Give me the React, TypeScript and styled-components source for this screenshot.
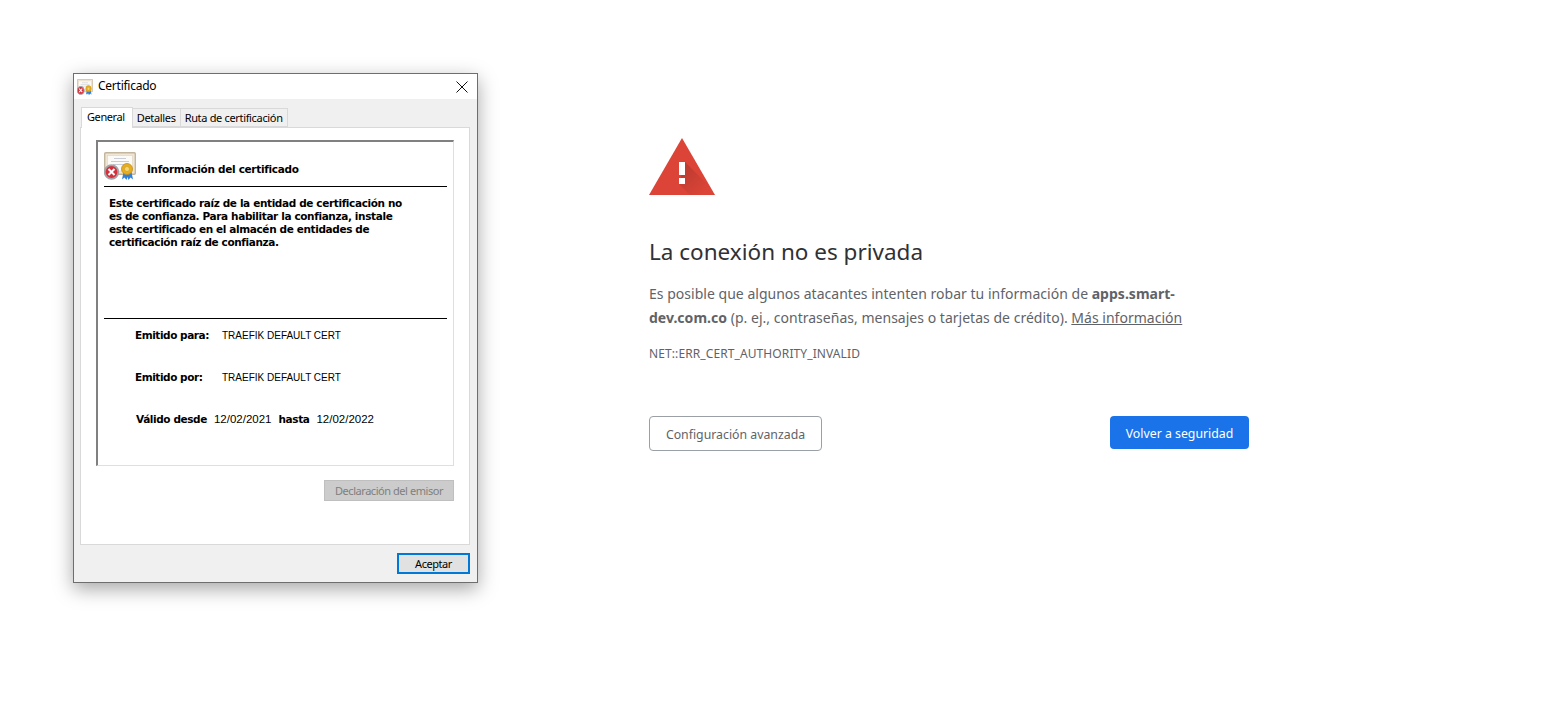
import styled, { createGlobalStyle } from 'styled-components';

const GlobalStyle = createGlobalStyle`
  html, body {
    margin: 0;
    padding: 0;
    background: #fff;
    overflow: hidden;
  }
`;

const CertIcon = ({ width, height }: { width: number; height: number }) => (
  <CertSvg width={width} height={height} viewBox="0 0 32 28" preserveAspectRatio="none">
    <rect x="0.700" y="0.700" width="30.600" height="21.600" rx="1" fill="#efe6d6" stroke="#c4b59d" strokeWidth="1.400" />
    <rect x="3.500" y="3.500" width="25" height="15.500" fill="#fbfaf6" stroke="#dcd2c0" strokeWidth="0.600" />
    <path d="M10 6.500h12M7 9.500h18M9 12.500h14" stroke="#c8ccd6" strokeWidth="1" />
    <path d="M19.500 20l-1.500 7.500 2.500-2 2 2.500 1-3 1 3 2-2.500 2.500 2-1.500-7.500z" fill="#2f7fdc" />
    <circle cx="23" cy="17" r="5.500" fill="#e8ad1f" stroke="#c08d18" strokeWidth="0.800" />
    <circle cx="23" cy="17" r="2.500" fill="#f4d66f" stroke="#c79a26" strokeWidth="0.600" />
    <circle cx="7.500" cy="20" r="6.800" fill="#d4303c" stroke="#a3a3a8" strokeWidth="1.800" />
    <path d="M4.500 17l6 6M10.500 17l-6 6" stroke="#fff" strokeWidth="2" />
  </CertSvg>
);

const WarningIcon = () => (
  <svg width="66" height="57" viewBox="0 0 66 57">
    <defs>
      <linearGradient id="markShadow" x1="33" y1="30" x2="56" y2="53" gradientUnits="userSpaceOnUse">
        <stop offset="0" stopColor="#000" stopOpacity="0.14" />
        <stop offset="1" stopColor="#000" stopOpacity="0" />
      </linearGradient>
    </defs>
    <path d="M33 0L66 57H0z" fill="#db4437" />
    <path d="M36 24L62 50L66 57H41L30 46z" fill="url(#markShadow)" />
    <rect x="30" y="24" width="6" height="13" fill="#fff" />
    <rect x="30" y="40" width="6" height="6" fill="#fff" />
  </svg>
);

const App = () => (
  <Page>
    <GlobalStyle />
    <Dialog>
      <TitleBar>
        <CertIcon width={16} height={16} />
        <WindowTitle>Certificado</WindowTitle>
        <CloseGlyph width="12" height="12" viewBox="0 0 12 12">
          <path d="M0.500 0.500L11.500 11.500M11.500 0.500L0.500 11.500" stroke="#111" strokeWidth="1" fill="none" />
        </CloseGlyph>
      </TitleBar>
      <DialogBody>
        <Tabs>
          <Tab $active>General</Tab>
          <Tab>Detalles</Tab>
          <Tab>Ruta de certificación</Tab>
        </Tabs>
        <TabPanel>
          <InfoBox>
            <InfoHeader>
              <CertIcon width={32} height={28} />
              <InfoTitle>Información del certificado</InfoTitle>
            </InfoHeader>
            <InfoPurpose>
              Este certificado raíz de la entidad de certificación no
              <br />
              es de confianza. Para habilitar la confianza, instale
              <br />
              este certificado en el almacén de entidades de
              <br />
              certificación raíz de confianza.
            </InfoPurpose>
            <InfoFields>
              <FieldRow>
                <FieldLabel>Emitido para:</FieldLabel>
                <FieldValue>TRAEFIK DEFAULT CERT</FieldValue>
              </FieldRow>
              <FieldRow>
                <FieldLabel>Emitido por:</FieldLabel>
                <FieldValue>TRAEFIK DEFAULT CERT</FieldValue>
              </FieldRow>
              <DatesRow>
                <DateLabel>Válido desde</DateLabel>
                <DateValue>12/02/2021</DateValue>
                <DateLabel>hasta</DateLabel>
                <DateValue>12/02/2022</DateValue>
              </DatesRow>
            </InfoFields>
          </InfoBox>
          <IssuerRow>
            <IssuerButton>Declaración del emisor</IssuerButton>
          </IssuerRow>
        </TabPanel>
        <DialogFooter>
          <AcceptButton>Aceptar</AcceptButton>
        </DialogFooter>
      </DialogBody>
    </Dialog>

    <Interstitial>
      <WarningIcon />
      <Heading>La conexión no es privada</Heading>
      <Message>
        Es posible que algunos atacantes intenten robar tu información de <strong>apps.smart-dev.com.co</strong> (p. ej., contraseñas, mensajes o tarjetas de crédito). <MoreLink href="#">Más información</MoreLink>
      </Message>
      <ErrorCode>NET::ERR_CERT_AUTHORITY_INVALID</ErrorCode>
      <Actions>
        <SecondaryButton>Configuración avanzada</SecondaryButton>
        <PrimaryButton>Volver a seguridad</PrimaryButton>
      </Actions>
    </Interstitial>
  </Page>
);

export default App;

const Page = styled.div`
  display: flex;
  align-items: flex-start;
  width: 1546px;
  height: 712px;
  padding: 73px 0 0 73px;
  box-sizing: border-box;
  background: #fff;
`;

const Dialog = styled.div`
  display: flex;
  flex-direction: column;
  flex: none;
  width: 405px;
  height: 510px;
  box-sizing: border-box;
  border: 1px solid #6e6e6e;
  background: #f0f0f0;
  box-shadow: 0 6px 18px rgba(0, 0, 0, 0.35);
  font-family: "Noto Sans", sans-serif;
  color: #000;
`;

const TitleBar = styled.div`
  display: flex;
  align-items: center;
  flex: none;
  height: 25px;
  padding: 0 9px 0 3px;
  background: #fff;
`;

const CertSvg = styled.svg`
  flex: none;
  align-self: flex-start;

  ${TitleBar} & {
    align-self: center;
  }
`;

const WindowTitle = styled.span`
  margin: -2px 0 0 5px;
  font-size: 12px;
  letter-spacing: -0.25px;
  flex: 1;
`;

const CloseGlyph = styled.svg`
  flex: none;
`;

const DialogBody = styled.div`
  display: flex;
  flex-direction: column;
  flex: 1;
  padding: 8px 7px 7px 6px;
`;

const Tabs = styled.div`
  display: flex;
  align-items: flex-end;
  height: 20px;
  padding-left: 1px;
  position: relative;
  z-index: 1;
`;

const Tab = styled.div<{ $active?: boolean }>`
  box-sizing: border-box;
  height: ${({ $active }) => ($active ? '21px' : '19px')};
  margin-bottom: ${({ $active }) => ($active ? '-1px' : '0')};
  padding: ${({ $active }) => ($active ? '0 7px 0 5px' : '0 4px 0 4px')};
  line-height: 18px;
  font-size: 11px;
  letter-spacing: ${({ $active }) => ($active ? '-0.4px' : '-0.33px')};
  background: ${({ $active }) => ($active ? '#fff' : '#f0f0f0')};
  border: 1px solid #d9d9d9;
  border-bottom: ${({ $active }) => ($active ? 'none' : '1px solid #d9d9d9')};
  margin-left: ${({ $active }) => ($active ? '0' : '-1px')};
`;

const TabPanel = styled.div`
  display: flex;
  flex-direction: column;
  box-sizing: border-box;
  width: 390px;
  height: 418px;
  padding: 12px 15px 0 15px;
  background: #fff;
  border: 1px solid #d9d9d9;
`;

const InfoBox = styled.div`
  display: flex;
  flex-direction: column;
  box-sizing: border-box;
  width: 358px;
  height: 326px;
  padding: 0 6px 0 6px;
  border-top: 2px solid #808080;
  border-left: 2px solid #808080;
  border-right: 1px solid #dfdfdf;
  border-bottom: 1px solid #dfdfdf;
`;

const InfoHeader = styled.div`
  display: flex;
  align-items: center;
  flex: none;
  box-sizing: border-box;
  height: 45px;
  padding-top: 10px;
  border-bottom: 1px solid #000;
`;

const InfoTitle = styled.span`
  margin-left: 11px;
  font-family: "DejaVu Sans", sans-serif;
  font-size: 10.500px;
  font-weight: 700;
  letter-spacing: -0.3px;
`;

const InfoPurpose = styled.div`
  flex: none;
  height: 132px;
  padding: 10px 0 0 5px;
  box-sizing: border-box;
  border-bottom: 1px solid #000;
  font-family: "DejaVu Sans", sans-serif;
  font-size: 10.500px;
  font-weight: 700;
  line-height: 13px;
  letter-spacing: -0.37px;
`;

const InfoFields = styled.div`
  display: flex;
  flex-direction: column;
  gap: 28px;
  padding: 9px 0 0 31px;
`;

const FieldRow = styled.div`
  display: flex;
  align-items: center;
  height: 14px;
`;

const FieldLabel = styled.span`
  width: 87px;
  font-family: "DejaVu Sans", sans-serif;
  font-size: 10.500px;
  font-weight: 700;
  letter-spacing: -0.45px;
`;

const FieldValue = styled.span`
  font-family: "Liberation Sans", sans-serif;
  font-size: 10px;
`;

const DatesRow = styled(FieldRow)`
  gap: 7px;
  margin-left: 1px;
`;

const DateLabel = styled(FieldLabel)`
  width: auto;
  letter-spacing: -0.4px;
`;

const DateValue = styled(FieldValue)`
  font-size: 11.500px;
`;

const IssuerRow = styled.div`
  display: flex;
  justify-content: flex-end;
  margin-top: 14px;
`;

const IssuerButton = styled.div`
  width: 130px;
  height: 21px;
  box-sizing: border-box;
  text-align: center;
  line-height: 19px;
  font-size: 11px;
  letter-spacing: -0.45px;
  color: #7f7f7f;
  background: #cccccc;
  border: 1px solid #bfbfbf;
`;

const DialogFooter = styled.div`
  display: flex;
  justify-content: flex-end;
  margin-top: 8px;
`;

const AcceptButton = styled.div`
  width: 73px;
  height: 21px;
  box-sizing: border-box;
  text-align: center;
  line-height: 18px;
  font-size: 11px;
  letter-spacing: -0.45px;
  background: #e1e1e1;
  border: 2px solid #0078d7;
`;

const Interstitial = styled.div`
  display: flex;
  flex-direction: column;
  flex: none;
  width: 600px;
  margin: 65px 0 0 171px;
  font-family: "Noto Sans", sans-serif;
  color: #5f6368;
`;

const Heading = styled.h1`
  margin: 41px 0 0 0;
  font-size: 22.500px;
  font-weight: 400;
  line-height: 32px;
  color: #2f3135;
`;

const Message = styled.p`
  margin: 14px 0 0 0;
  width: 540px;
  font-size: 14px;
  line-height: 24px;
  letter-spacing: 0.02px;

  strong {
    font-weight: 700;
  }
`;

const MoreLink = styled.a`
  color: #5f6368;
  text-decoration: underline;
`;

const ErrorCode = styled.div`
  margin-top: 16px;
  font-size: 12px;
  line-height: 16px;
  letter-spacing: 0.1px;
`;

const Actions = styled.div`
  display: flex;
  align-items: flex-start;
  justify-content: space-between;
  margin-top: 54px;
`;

const SecondaryButton = styled.button`
  width: 173px;
  height: 35px;
  padding: 2px 0 0 0;
  font: inherit;
  font-size: 12.300px;
  color: #5f6368;
  background: #fff;
  border: 1px solid #9aa0a6;
  border-radius: 4px;
`;

const PrimaryButton = styled.button`
  width: 139px;
  height: 33px;
  padding: 2px 0 0 0;
  font: inherit;
  font-size: 12.300px;
  color: #fff;
  background: #1a73e8;
  border: none;
  border-radius: 4px;
`;
